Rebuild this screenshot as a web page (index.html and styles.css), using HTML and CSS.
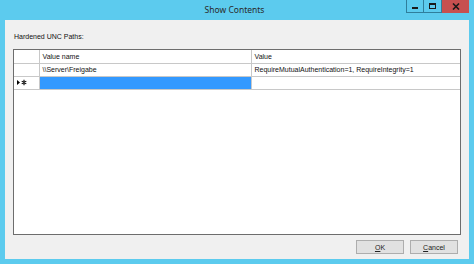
FILE: index.html
```html
<!DOCTYPE html>
<html lang="en">
<head>
    <meta charset="UTF-8">
    <title>Show Contents</title>
    <link rel="stylesheet" href="styles.css">
</head>
<body>
    <div class="window">
        <div class="titlebar">
            <div></div>
            <div class="title">Show Contents</div>
            <div class="caption">
                <div class="cap cap-min"><span class="glyph-min"></span></div>
                <div class="cap cap-max"><span class="glyph-max"></span></div>
                <div class="cap cap-close">
                    <svg width="8" height="7" viewBox="0 0 8 7"><path d="M1 0.5 L7 6.5 M7 0.5 L1 6.5" stroke="#1a1a1a" stroke-width="1.6"/></svg>
                </div>
            </div>
        </div>

        <div class="client">
            <div class="label">Hardened UNC Paths:</div>

            <div class="grid-box">
                <table class="grid">
                    <thead>
                        <tr>
                            <th class="rowhead"></th>
                            <th class="col-name">Value name</th>
                            <th class="col-value">Value</th>
                        </tr>
                    </thead>
                    <tbody>
                        <tr>
                            <td class="rowhead"></td>
                            <td>\\Server\Freigabe</td>
                            <td>RequireMutualAuthentication=1, RequireIntegrity=1</td>
                        </tr>
                        <tr>
                            <td class="rowhead">
                                <svg width="12" height="7" viewBox="0 0 12 7"><path d="M1 1 L4 3.5 L1 6 Z" fill="#000"/><path d="M8 0.8 V6.2 M5.7 2.1 L10.3 4.9 M10.3 2.1 L5.7 4.9" stroke="#000" stroke-width="1.1"/></svg>
                            </td>
                            <td class="selected"></td>
                            <td></td>
                        </tr>
                    </tbody>
                </table>
            </div>

            <div class="actions">
                <button class="btn btn-ok"><u>O</u>K</button>
                <button class="btn btn-cancel"><u>C</u>ancel</button>
            </div>
        </div>
    </div>
</body>
</html>
```

FILE: styles.css
```css
body {
    margin: 0;
    font-family: "Liberation Sans", Arial, sans-serif;
    color: #000;
}

.window {
    width: 474px;
    height: 264px;
    box-sizing: border-box;
    background-color: #5ccbee;
    padding: 0 5px 5px 5px;
    display: flex;
    flex-direction: column;
}

.titlebar {
    height: 20px;
    display: grid;
    grid-template-columns: 1fr auto 1fr;
    margin: 0 -5px 0 -5px;
    padding-right: 5px;
}
.title {
    font-family: "Noto Sans", sans-serif;
    font-size: 8.5px;
    color: #2a2a2a;
    line-height: 20px;
}
.caption {
    justify-self: end;
    display: flex;
    height: 13px;
}
.cap {
    height: 13px;
    box-sizing: border-box;
    display: flex;
    align-items: center;
    justify-content: center;
}
.cap-min, .cap-max {
    width: 17px;
    background-color: #5ccbee;
    border-left: 1px solid #2f7e9c;
    border-bottom: 1px solid #2f7e9c;
}
.cap-max {
    width: 18px;
}
.cap-close {
    width: 28px;
    background-color: #c75050;
    border-left: 1px solid #2f7e9c;
}
.glyph-min {
    width: 6px;
    height: 2px;
    background: #1a1a1a;
    margin-top: 4px;
}
.glyph-max {
    width: 5px;
    height: 3px;
    border: 1px solid #1a1a1a;
    border-top-width: 2px;
}

.client {
    flex: 1;
    background-color: #f0f0f0;
    display: flex;
    flex-direction: column;
    padding: 0 8px 0 8px;
}
.label {
    font-size: 7px;
    margin: 13px 0 0 1px;
    height: 16px;
    color: #111;
}

.grid-box {
    height: 186px;
    box-sizing: border-box;
    background-color: #fff;
    border: 1px solid #6d6d6d;
}
.grid {
    border-collapse: collapse;
    width: 100%;
    table-layout: fixed;
    font-size: 7px;
}
.grid th, .grid td {
    height: 13px;
    padding: 0 0 0 3px;
    box-sizing: border-box;
    text-align: left;
    font-weight: normal;
    border: 1px solid #c8c8c8;
    white-space: nowrap;
    overflow: hidden;
    color: #111;
}
.grid tr:first-child th {
    border-top: none;
}
.grid .rowhead {
    width: 25px;
    border-left: none;
    padding: 0 0 0 2px;
}
.grid .col-name {
    width: 212px;
}
.grid th:last-child, .grid td:last-child {
    border-right: none;
}
.grid td.selected {
    background-color: #3399ff;
}
.grid .rowhead svg {
    display: block;
}

.actions {
    display: flex;
    justify-content: flex-end;
    gap: 6px;
    margin-top: 5px;
    padding-right: 3px;
}
.btn {
    width: 48px;
    height: 14px;
    padding: 0;
    background-color: #e1e1e1;
    border: 1px solid #adadad;
    font-family: "Liberation Sans", Arial, sans-serif;
    font-size: 7px;
    color: #222;
}
```
